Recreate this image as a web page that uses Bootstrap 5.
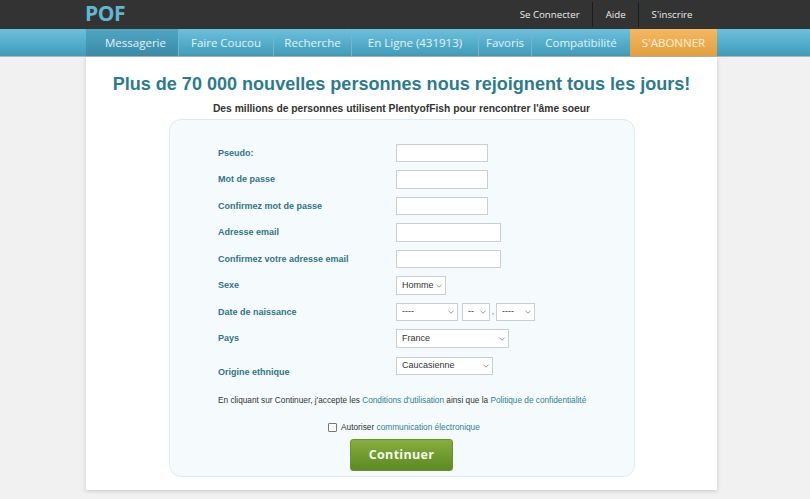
<!DOCTYPE html>
<html lang="fr">
<head>
    <meta charset="UTF-8">
    <meta name="viewport" content="width=device-width, initial-scale=1.0">
    <title>POF</title>
    <link href="https://cdn.jsdelivr.net/npm/bootstrap@5.3.0/dist/css/bootstrap.min.css" rel="stylesheet">
    <style>
        body {
            background-color: #f1f1f1;
            font-family: "Liberation Sans", Arial, sans-serif;
            height: 499px;
            overflow: hidden;
        }
        .page-col {
            width: 631px;
            margin-left: 86px;
        }
        .top-bar {
            height: 29px;
            background: #333333;
        }
        .brand-logo {
            font-family: "Open Sans", sans-serif;
            font-weight: 700;
            font-size: 21px;
            line-height: 26px;
            color: #62b6d2;
            letter-spacing: -0.4px;
            margin-left: -1px;
        }
        .top-links {
            margin-right: 12px;
        }
        .top-link {
            font-family: "Open Sans", sans-serif;
            font-size: 9.7px;
            color: #ececec;
            line-height: 25px;
            padding: 0 12.5px;
            margin-top: 2px;
            text-decoration: none;
            border-left: 1px solid #1c1c1c;
        }
        .top-link:first-child {
            border-left: 0;
        }
        .menu-bar {
            height: 28px;
            background: linear-gradient(#6cc0dc, #3f9cb9);
            border-bottom: 1px solid #b5b5b5;
        }
        .menu-link {
            font-family: "Open Sans", sans-serif;
            font-size: 11.5px;
            line-height: 27px;
            color: #e3f2f7;
            text-align: center;
            text-decoration: none;
            border-left: 1px solid #6fb7ce;
        }
        .menu-link.is-active {
            background: linear-gradient(#4fa6c2, #3a8ca8);
            border-left: 0;
            padding-left: 7px;
        }
        .menu-link.is-orange {
            background: linear-gradient(#f4b862, #e39f3f);
            color: #fdf1dc;
            border-left: 0;
        }
        .w-msg { width: 92px; }
        .w-wink { width: 95px; }
        .w-search { width: 78px; }
        .w-online { width: 127px; }
        .w-fav { width: 53px; }
        .w-match { width: 99px; }
        .w-sub { width: 87px; }
        .sheet {
            background: #ffffff;
            height: 433px;
            box-shadow: 0 1px 4px rgba(0, 0, 0, 0.18);
        }
        .main-title {
            font-size: 18.06px;
            font-weight: 700;
            line-height: 22px;
            color: #2b7b90;
            margin: 0;
            padding-top: 16px;
        }
        .sub-title {
            font-size: 10.3px;
            font-weight: 700;
            line-height: 14px;
            color: #333333;
            margin: 7px 0 0;
        }
        .form-panel {
            width: 466px;
            height: 358px;
            margin: 3px 0 0 83px;
            padding: 24px 0 0 48px;
            background: #f5fbfc;
            border: 1px solid #dcebef;
            border-radius: 12px;
        }
        .field-row {
            height: 18px;
            margin-bottom: 8.5px;
        }
        .field-row-last {
            margin-top: 9.5px;
        }
        .field-label {
            width: 178px;
            font-size: 9px;
            font-weight: 700;
            color: #2f7488;
            padding-top: 1px;
        }
        .label-low {
            align-self: flex-end;
            transform: translateY(4px);
        }
        .box-input,
        .box-select {
            height: 18.5px;
            border: 1px solid #c9cfd1;
            background-color: #ffffff;
            font-size: 9px;
            color: #333333;
            font-family: "Liberation Sans", Arial, sans-serif;
            padding: 0 0 0 5px;
            border-radius: 0;
        }
        .box-select {
            appearance: none;
            background-image: url("data:image/svg+xml,%3Csvg xmlns='http://www.w3.org/2000/svg' width='6' height='4'%3E%3Cpath d='M.5 .8l2.5 2.4 2.5-2.4' fill='none' stroke='%23999999'/%3E%3C/svg%3E");
            background-repeat: no-repeat;
            background-position: right 3px center;
        }
        .size-92 { width: 92px; }
        .size-105 { width: 105px; }
        .size-50 { width: 50px; }
        .size-62 { width: 62px; }
        .size-28 { width: 28px; }
        .size-39 { width: 39px; }
        .size-113 { width: 113px; }
        .size-97 { width: 97px; }
        .date-sep {
            font-size: 9px;
            width: 6px;
            text-align: center;
            color: #888888;
        }
        .date-sep-first {
            width: 4px;
        }
        .terms-line {
            font-size: 8.25px;
            line-height: 12px;
            color: #333333;
            margin: 20px 0 0;
        }
        .allow-line {
            font-size: 8.3px;
            line-height: 12px;
            color: #333333;
            margin: 14px 0 0;
            padding-left: 110px;
        }
        .tick-box {
            width: 9px;
            height: 9px;
            border: 1px solid #767676;
            background: #ffffff;
            border-radius: 1px;
            margin-right: 4px;
            appearance: none;
        }
        .soft-link {
            color: #2f7f95;
            text-decoration: none;
        }
        .go-btn {
            display: block;
            width: 103px;
            height: 32px;
            margin: 6px 0 0 132px;
            padding: 0;
            font-family: "Open Sans", sans-serif;
            font-size: 12.5px;
            font-weight: 700;
            letter-spacing: 0.3px;
            color: #f4f8ec;
            background: linear-gradient(#87ad3f, #5c8a22);
            border: 1px solid #6a9330;
            border-radius: 3px;
        }
    </style>
</head>
<body>

<div class="top-bar">
    <div class="page-col d-flex justify-content-between">
        <div class="brand-logo">POF</div>
        <div class="top-links d-flex">
            <a class="top-link" href="#">Se Connecter</a>
            <a class="top-link" href="#">Aide</a>
            <a class="top-link" href="#">S'inscrire</a>
        </div>
    </div>
</div>

<div class="menu-bar">
    <div class="page-col d-flex">
        <a class="menu-link is-active w-msg" href="#">Messagerie</a>
        <a class="menu-link w-wink" href="#">Faire Coucou</a>
        <a class="menu-link w-search" href="#">Recherche</a>
        <a class="menu-link w-online" href="#">En Ligne (431913)</a>
        <a class="menu-link w-fav" href="#">Favoris</a>
        <a class="menu-link w-match" href="#">Compatibilité</a>
        <a class="menu-link is-orange w-sub" href="#">S'ABONNER</a>
    </div>
</div>

<div class="page-col sheet">
    <h1 class="main-title text-center">Plus de 70 000 nouvelles personnes nous rejoignent tous les jours!</h1>
    <p class="sub-title text-center">Des millions de personnes utilisent PlentyofFish pour rencontrer l'âme soeur</p>

    <form class="form-panel" onsubmit="return false">
        <div class="field-row d-flex align-items-center">
            <label class="field-label">Pseudo:</label>
            <input class="box-input size-92" type="text">
        </div>
        <div class="field-row d-flex align-items-center">
            <label class="field-label">Mot de passe</label>
            <input class="box-input size-92" type="password">
        </div>
        <div class="field-row d-flex align-items-center">
            <label class="field-label">Confirmez mot de passe</label>
            <input class="box-input size-92" type="password">
        </div>
        <div class="field-row d-flex align-items-center">
            <label class="field-label">Adresse email</label>
            <input class="box-input size-105" type="text">
        </div>
        <div class="field-row d-flex align-items-center">
            <label class="field-label">Confirmez votre adresse email</label>
            <input class="box-input size-105" type="text">
        </div>
        <div class="field-row d-flex align-items-center">
            <label class="field-label">Sexe</label>
            <select class="box-select size-50"><option>Homme</option></select>
        </div>
        <div class="field-row d-flex align-items-center">
            <label class="field-label">Date de naissance</label>
            <select class="box-select size-62"><option>----</option></select>
            <span class="date-sep date-sep-first"></span>
            <select class="box-select size-28"><option>--</option></select>
            <span class="date-sep">,</span>
            <select class="box-select size-39"><option>----</option></select>
        </div>
        <div class="field-row d-flex align-items-center">
            <label class="field-label">Pays</label>
            <select class="box-select size-113"><option>France</option></select>
        </div>
        <div class="field-row field-row-last d-flex align-items-center">
            <label class="field-label label-low">Origine ethnique</label>
            <select class="box-select size-97"><option>Caucasienne</option></select>
        </div>

        <p class="terms-line">En cliquant sur Continuer, j'accepte les <a class="soft-link" href="#">Conditions d'utilisation</a> ainsi que la <a class="soft-link" href="#">Politique de confidentialité</a></p>
        <div class="allow-line d-flex align-items-center">
            <input class="tick-box" type="checkbox">
            <span>Autoriser <a class="soft-link" href="#">communication électronique</a></span>
        </div>
        <button class="go-btn" type="submit">Continuer</button>
    </form>
</div>

<script src="https://cdn.jsdelivr.net/npm/bootstrap@5.3.0/dist/js/bootstrap.bundle.min.js"></script>
</body>
</html>
